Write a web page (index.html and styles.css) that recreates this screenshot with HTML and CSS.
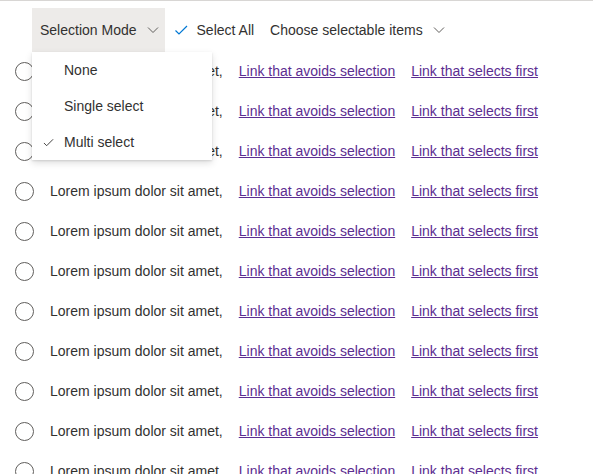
FILE: index.html
```html
<!DOCTYPE html>
<html lang="en">
<head>
<meta charset="utf-8">
<title>Selection</title>
<link rel="stylesheet" href="styles.css">
</head>
<body>
<div class="page">
  <div class="command-bar">
    <button class="cmd cmd-open" type="button">
      <span class="cmd-label">Selection Mode</span>
      <svg class="chevron" viewBox="0 0 12 12"><path d="M1 3.5 L6 8.5 L11 3.5" /></svg>
    </button>
    <button class="cmd" type="button">
      <svg class="cmd-icon" viewBox="0 0 16 16"><path d="M2.5 8.5 L6 12 L14 4" /></svg>
      <span class="cmd-label">Select All</span>
    </button>
    <button class="cmd" type="button">
      <span class="cmd-label">Choose selectable items</span>
      <svg class="chevron" viewBox="0 0 12 12"><path d="M1 3.5 L6 8.5 L11 3.5" /></svg>
    </button>
  </div>

  <ul class="menu">
    <li class="menu-item"><span class="menu-check"></span><span>None</span></li>
    <li class="menu-item"><span class="menu-check"></span><span>Single select</span></li>
    <li class="menu-item"><span class="menu-check"><svg viewBox="0 0 12 12"><path d="M1 6.5 L4 9.5 L11 2.5" /></svg></span><span>Multi select</span></li>
  </ul>

  <div class="list">
    <div class="row"><span class="check"><span class="circle"></span></span><span class="text">Lorem ipsum dolor sit amet,</span><a href="#" class="link">Link that avoids selection</a><a href="#" class="link">Link that selects first</a></div>
    <div class="row"><span class="check"><span class="circle"></span></span><span class="text">Lorem ipsum dolor sit amet,</span><a href="#" class="link">Link that avoids selection</a><a href="#" class="link">Link that selects first</a></div>
    <div class="row"><span class="check"><span class="circle"></span></span><span class="text">Lorem ipsum dolor sit amet,</span><a href="#" class="link">Link that avoids selection</a><a href="#" class="link">Link that selects first</a></div>
    <div class="row"><span class="check"><span class="circle"></span></span><span class="text">Lorem ipsum dolor sit amet,</span><a href="#" class="link">Link that avoids selection</a><a href="#" class="link">Link that selects first</a></div>
    <div class="row"><span class="check"><span class="circle"></span></span><span class="text">Lorem ipsum dolor sit amet,</span><a href="#" class="link">Link that avoids selection</a><a href="#" class="link">Link that selects first</a></div>
    <div class="row"><span class="check"><span class="circle"></span></span><span class="text">Lorem ipsum dolor sit amet,</span><a href="#" class="link">Link that avoids selection</a><a href="#" class="link">Link that selects first</a></div>
    <div class="row"><span class="check"><span class="circle"></span></span><span class="text">Lorem ipsum dolor sit amet,</span><a href="#" class="link">Link that avoids selection</a><a href="#" class="link">Link that selects first</a></div>
    <div class="row"><span class="check"><span class="circle"></span></span><span class="text">Lorem ipsum dolor sit amet,</span><a href="#" class="link">Link that avoids selection</a><a href="#" class="link">Link that selects first</a></div>
    <div class="row"><span class="check"><span class="circle"></span></span><span class="text">Lorem ipsum dolor sit amet,</span><a href="#" class="link">Link that avoids selection</a><a href="#" class="link">Link that selects first</a></div>
    <div class="row"><span class="check"><span class="circle"></span></span><span class="text">Lorem ipsum dolor sit amet,</span><a href="#" class="link">Link that avoids selection</a><a href="#" class="link">Link that selects first</a></div>
    <div class="row"><span class="check"><span class="circle"></span></span><span class="text">Lorem ipsum dolor sit amet,</span><a href="#" class="link">Link that avoids selection</a><a href="#" class="link">Link that selects first</a></div>
    <div class="row"><span class="check"><span class="circle"></span></span><span class="text">Lorem ipsum dolor sit amet,</span><a href="#" class="link">Link that avoids selection</a><a href="#" class="link">Link that selects first</a></div>
  </div>
</div>
</body>
</html>
```

FILE: styles.css
```css
html, body {
  margin: 0;
  padding: 0;
  background: #ffffff;
}

body {
  font-family: "Liberation Sans", Arial, sans-serif;
  font-size: 14px;
  color: #323130;
  overflow: hidden;
}

.page {
  position: relative;
  border-top: 1px solid #d8d6d4;
  padding-top: 7px;
}

/* command bar */
.command-bar {
  display: flex;
  height: 44px;
  padding-left: 32px;
}

.cmd {
  display: flex;
  align-items: center;
  flex-shrink: 0;
  height: 44px;
  padding: 0 4px;
  border: none;
  background: transparent;
  font: inherit;
  color: #323130;
}

.cmd-open {
  background: #edebe9;
}

.cmd-label {
  margin: 0 4px;
  white-space: nowrap;
}

.cmd-icon {
  width: 16px;
  height: 16px;
  margin: 0 4px;
  fill: none;
  stroke: #0078d4;
  stroke-width: 1.2;
}

.chevron {
  flex-shrink: 0;
  width: 12px;
  height: 12px;
  margin: 0 2px 0 6px;
  fill: none;
  stroke: #605e5c;
  stroke-width: 1;
}

/* dropdown menu */
.menu {
  position: absolute;
  left: 32px;
  top: 51px;
  width: 180px;
  margin: 0;
  padding: 0;
  list-style: none;
  background: #ffffff;
  box-shadow: 0 3.2px 7.2px rgba(0, 0, 0, 0.132), 0 0.6px 1.8px rgba(0, 0, 0, 0.108);
  z-index: 2;
}

.menu-item {
  display: flex;
  align-items: center;
  height: 36px;
  color: #323130;
}

.menu-check {
  display: flex;
  align-items: center;
  justify-content: center;
  width: 32px;
  height: 36px;
}

.menu-check svg {
  width: 11px;
  height: 11px;
  fill: none;
  stroke: #323130;
  stroke-width: 1;
}

/* list rows */
.list {
  display: flex;
  flex-direction: column;
  margin-top: -1px;
}

.row {
  display: flex;
  align-items: center;
  height: 40px;
  gap: 16px;
  white-space: nowrap;
}

.check {
  display: flex;
  align-items: center;
  justify-content: flex-end;
  width: 34px;
}

.circle {
  width: 17px;
  height: 17px;
  border: 1px solid #605e5c;
  border-radius: 50%;
}

.row .text {
  margin-left: -16px;
  padding-left: 16px;
}

.link {
  color: #5c2d91;
  text-decoration: underline;
}
```
